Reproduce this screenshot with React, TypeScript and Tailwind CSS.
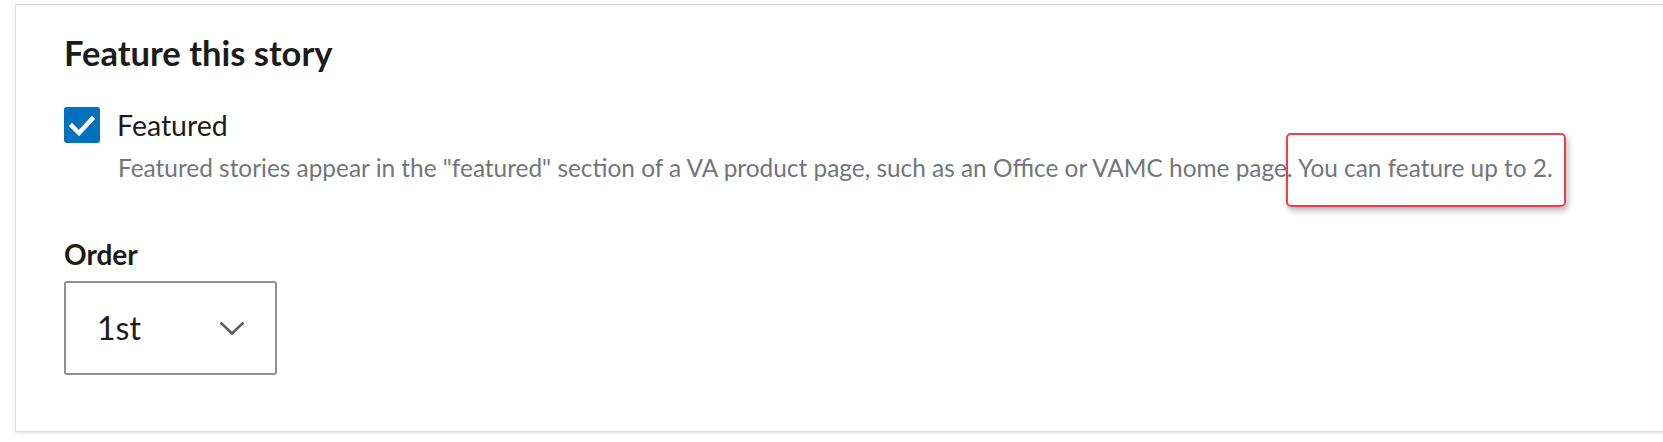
import React from "react";

const font = { fontFamily: "Lato, 'Liberation Sans', sans-serif" };

const CheckIcon = () => (
  <svg viewBox="0 0 36 36" className="h-9 w-9 shrink-0">
    <rect width="36" height="36" rx="3" fill="#0071bb" />
    <polyline points="8,19 15,26 28,12" fill="none" stroke="#fff" strokeWidth="4.5" strokeLinecap="square" />
  </svg>
);

const Chevron = () => (
  <svg viewBox="0 0 26 14" className="h-[14px] w-[26px]">
    <polyline points="1.5,1.5 13,12.5 24.5,1.5" fill="none" stroke="#565c65" strokeWidth="2.5" />
  </svg>
);

export default function App() {
  return (
    <div className="relative h-[442px] w-screen overflow-hidden bg-white" style={font}>
      <div className="ml-[15px] mt-[4px] w-[1700px] border border-[#dcdee0] bg-white pl-[48px] pt-[28px] pb-[56px] shadow-[0_1px_4px_rgba(0,0,0,0.12)]">
        <h2 className="text-[34.5px] font-bold leading-[40px] text-[#1b1b1b]">Feature this story</h2>

        <div className="mt-[34px] flex items-start gap-[17px]">
          <CheckIcon />
          <span className="text-[28.5px] leading-[36px] text-[#1b1b1b]">Featured</span>
        </div>
        <p className="mt-[10px] pl-[54px] text-[24.4px] leading-[30px] text-[#71767a]">
          Featured stories appear in the "featured" section of a VA product page, such as an Office or VAMC home page. You can feature up to 2.
        </p>

        <div className="mt-[54px] text-[28px] font-bold leading-[34px] text-[#1b1b1b]">Order</div>
        <div className="mt-[10px] flex h-[94px] w-[213px] items-center justify-between rounded-[3px] border-2 border-[#8d9095] pl-[31px] pr-[30px]">
          <span className="text-[32px] leading-[40px] text-[#1b1b1b]">1st</span>
          <Chevron />
        </div>
      </div>

      {/* annotation highlight */}
      <div className="absolute left-[1286px] top-[133px] h-[74px] w-[280px] rounded-[5px] border-[2.5px] border-[#ef3e46] shadow-[2px_4px_6px_rgba(0,0,0,0.28)]" />
    </div>
  );
}
